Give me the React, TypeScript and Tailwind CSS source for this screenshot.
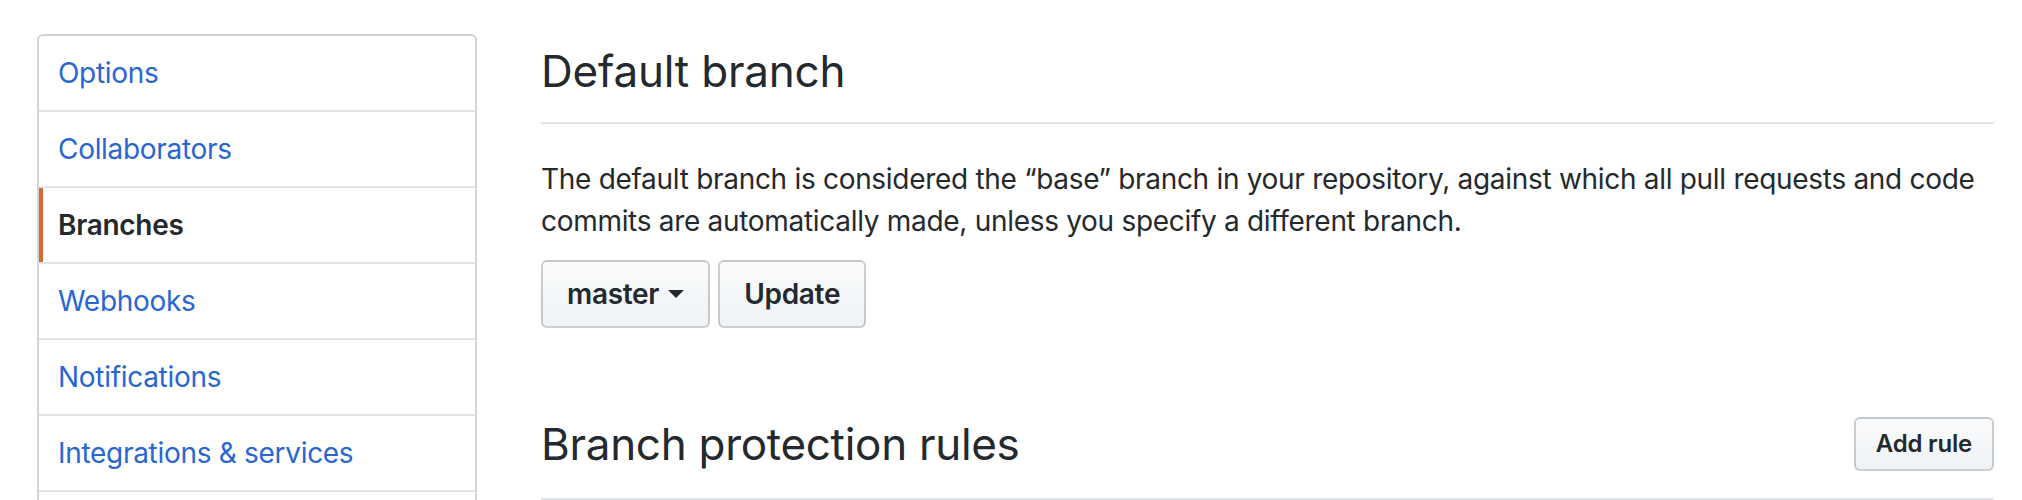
export default function App() {
  const items = [
    { label: "Options" },
    { label: "Collaborators" },
    { label: "Branches", active: true },
    { label: "Webhooks" },
    { label: "Notifications" },
    { label: "Integrations & services" },
    { label: "Deploy keys" },
  ]

  return (
    <div className="flex h-[500px] overflow-hidden bg-white text-[#24292e] font-['Inter','Noto_Sans',sans-serif]">
      {/* settings menu */}
      <nav className="ml-[37px] mt-[34px] w-[440px] shrink-0 self-start overflow-hidden rounded-[6px] border-2 border-[#d1d5da]">
        {items.map((item, i) => (
          <a
            key={item.label}
            href="#"
            className={`relative block px-[19px] py-[16px] text-[28px] leading-[42px] tracking-[-0.3px] ${i > 0 ? "border-t-2 border-[#e1e4e8]" : ""} ${item.active ? "font-semibold text-[#24292e]" : "text-[#2866d2]"}`}
          >
            {item.active && <span className="absolute inset-y-0 left-0 w-[4px] bg-[#d8692f]" />}
            {item.label}
          </a>
        ))}
      </nav>

      <main className="ml-[64px] w-[1453px] shrink-0 pt-[41px]">
        <div className="mb-[34px] border-b-2 border-[#e1e4e8] pb-[21px]">
          <h2 className="text-[44px] font-normal leading-[60px] tracking-[-0.2px]">Default branch</h2>
        </div>

        <p className="mb-[18px] text-[28px] leading-[42px] tracking-[-0.3px]">
          The default branch is considered the “base” branch in your repository, against which all pull requests and code commits are automatically made, unless you specify a different branch.
        </p>

        <div className="flex gap-[8px]">
          <button className="flex items-center rounded-[6px] border-2 border-[rgba(27,31,35,0.2)] bg-linear-to-b from-[#fafbfc] to-[#eff3f6] px-[24px] py-[12px] text-[28px] font-semibold leading-[40px] tracking-[-0.3px]">
            master
            <span className="ml-[9px] h-0 w-0 border-x-[8px] border-t-[8px] border-x-transparent border-t-[#24292e]" />
          </button>
          <button className="rounded-[6px] border-2 border-[rgba(27,31,35,0.2)] bg-linear-to-b from-[#fafbfc] to-[#eff3f6] px-[24px] py-[12px] text-[28px] font-semibold leading-[40px] tracking-[-0.3px]">
            Update
          </button>
        </div>

        <div className="mt-[86px] flex items-center justify-between border-b-2 border-[#e1e4e8] pb-[24px]">
          <h2 className="text-[44px] font-normal leading-[60px] tracking-[-0.3px]">Branch protection rules</h2>
          <button className="rounded-[6px] border-2 border-[rgba(27,31,35,0.2)] bg-linear-to-b from-[#fafbfc] to-[#eff3f6] px-[20px] py-[6px] text-[24px] font-semibold leading-[38px] tracking-[-0.2px]">
            Add rule
          </button>
        </div>
      </main>
    </div>
  )
}
